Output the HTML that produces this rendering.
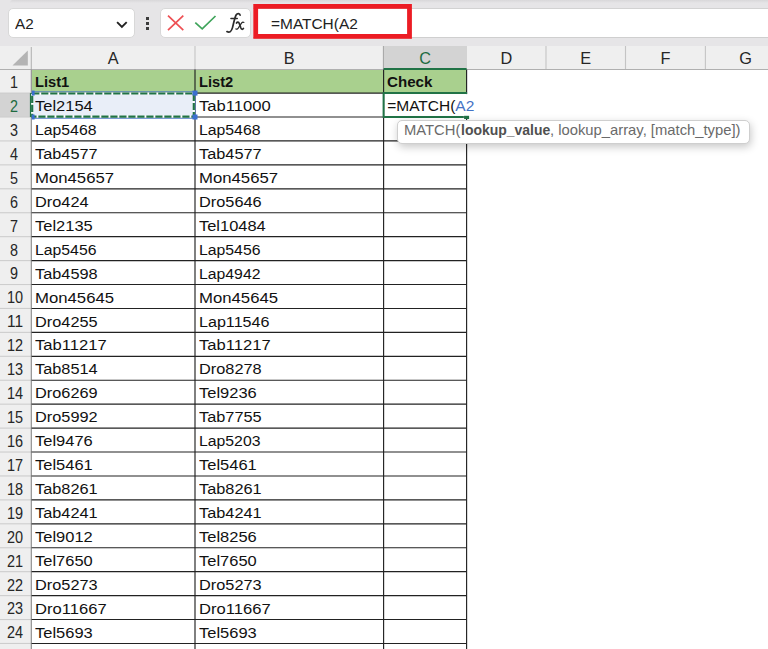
<!DOCTYPE html>
<html><head><meta charset="utf-8"><title>Excel</title>
<style>
html,body{margin:0;padding:0;}
body{width:768px;height:649px;overflow:hidden;background:#fff;position:relative;font-family:"Liberation Sans",sans-serif;color:#000;}
.a{position:absolute;}
.t{position:absolute;white-space:nowrap;line-height:20px;transform-origin:0 0;}
.c{transform-origin:50% 0;}
.b{font-weight:bold;}
</style></head><body>

<div class="a" style="left:0;top:0;width:768px;height:46px;background:#e6e5e7"></div>
<div class="a" style="left:10px;top:0;width:758px;height:3px;border-top-left-radius:3px;background:linear-gradient(#d8d7d9,#e6e5e7)"></div>
<div class="a" style="left:8px;top:8px;width:125px;height:28px;background:#fff;border:1px solid #d8d8d8;border-radius:5px"></div>
<svg class="a" style="left:114px;top:16px" width="16" height="16" viewBox="0 0 16 16"><path d="M3.1 6.1 L7.9 10.9 L12.7 6.1" fill="none" stroke="#222" stroke-width="1.9"/></svg>
<div class="a" style="left:145.6px;top:17.0px;width:3.3px;height:3px;background:#3c3c3c"></div>
<div class="a" style="left:145.6px;top:22.1px;width:3.3px;height:3px;background:#3c3c3c"></div>
<div class="a" style="left:145.6px;top:27.2px;width:3.3px;height:3px;background:#3c3c3c"></div>
<div class="a" style="left:160px;top:8px;width:89px;height:28px;background:#fff;border:1px solid #d8d8d8;border-radius:5px"></div>
<svg class="a" style="left:0;top:0" width="260" height="46" viewBox="0 0 260 46"><path d="M168 15.6 L183.3 30.2 M183.3 15.6 L168 30.2" fill="none" stroke="#ee5054" stroke-width="1.7"/><path d="M195.3 22.6 L202.2 28.9 L215.5 16" fill="none" stroke="#3fa45b" stroke-width="1.7"/><g fill="none" stroke="#2b2b2b" stroke-linecap="round"><path d="M240.1 15.2 C239.8 13.2 237.3 12.9 236.1 15 C234.7 17.5 233.7 23 232.5 27.6 C231.5 31.2 229.6 33.2 226.9 31.6" stroke-width="1.7"/><path d="M230.9 18.5 L237.3 18.5" stroke-width="1.4"/><path d="M236.5 23 C237.4 21.6 238.6 21.8 239.2 23.3 L240.9 28 C241.5 29.5 242.5 29.7 243.4 28.5" stroke-width="1.7"/><path d="M243.9 22.4 C243.1 21.8 242.4 22 241.7 22.9 L238.2 28.2 C237.5 29.2 236.7 29.5 235.9 28.9" stroke-width="1.2"/></g></svg>
<div class="a" style="left:253px;top:8px;width:515px;height:30px;background:#fff;border-top:1px solid #d2d2d2;border-bottom:1px solid #cfcfcf;box-sizing:border-box"></div>
<svg class="a" style="left:250px;top:0" width="170" height="44" viewBox="0 0 170 44"><rect x="5.7" y="6.4" width="153.8" height="30" fill="none" stroke="#ec1c24" stroke-width="4.8"/></svg>
<div class="a" style="left:0;top:46.0px;width:768px;height:23.5px;background:#efefef"></div>
<div class="a" style="left:0;top:69.5px;width:31.5px;height:600px;background:#efefef"></div>
<div class="a" style="left:383.6px;top:46.0px;width:83.0px;height:23.5px;background:#d3d3d3"></div>
<div class="a" style="left:0;top:93.08px;width:31px;height:23.93px;background:#d3d3d3"></div>
<div class="a" style="left:31.6px;top:69.5px;width:435.0px;height:23.58px;background:#a9d08e"></div>
<div class="a" style="left:31.6px;top:93.08px;width:163.4px;height:23.93px;background:#e9eef8"></div>
<svg class="a" style="left:0;top:0" width="768" height="649" viewBox="0 0 768 649"><path d="M27.8 50.5 L27.8 65.5 L12.5 65.5 Z" fill="#b4b4b4"/><line x1="195.0" y1="46.0" x2="195.0" y2="69.5" stroke="#c4c4c4" stroke-width="1.1"/><line x1="546.0" y1="46.0" x2="546.0" y2="69.5" stroke="#c4c4c4" stroke-width="1.1"/><line x1="625.5" y1="46.0" x2="625.5" y2="69.5" stroke="#c4c4c4" stroke-width="1.1"/><line x1="705.4" y1="46.0" x2="705.4" y2="69.5" stroke="#c4c4c4" stroke-width="1.1"/><line x1="383.4" y1="46.0" x2="383.4" y2="69.5" stroke="#a2a2a2" stroke-width="1"/><line x1="0" y1="69.5" x2="768" y2="69.5" stroke="#b0b0b0" stroke-width="1.2"/><line x1="0" y1="93.08" x2="31.5" y2="93.08" stroke="#cdcdcd" stroke-width="1.1"/><line x1="0" y1="117.01" x2="31.5" y2="117.01" stroke="#cdcdcd" stroke-width="1.1"/><line x1="0" y1="140.94" x2="31.5" y2="140.94" stroke="#cdcdcd" stroke-width="1.1"/><line x1="0" y1="164.87" x2="31.5" y2="164.87" stroke="#cdcdcd" stroke-width="1.1"/><line x1="0" y1="188.80" x2="31.5" y2="188.80" stroke="#cdcdcd" stroke-width="1.1"/><line x1="0" y1="212.73" x2="31.5" y2="212.73" stroke="#cdcdcd" stroke-width="1.1"/><line x1="0" y1="236.66" x2="31.5" y2="236.66" stroke="#cdcdcd" stroke-width="1.1"/><line x1="0" y1="260.59" x2="31.5" y2="260.59" stroke="#cdcdcd" stroke-width="1.1"/><line x1="0" y1="284.52" x2="31.5" y2="284.52" stroke="#cdcdcd" stroke-width="1.1"/><line x1="0" y1="308.45" x2="31.5" y2="308.45" stroke="#cdcdcd" stroke-width="1.1"/><line x1="0" y1="332.38" x2="31.5" y2="332.38" stroke="#cdcdcd" stroke-width="1.1"/><line x1="0" y1="356.31" x2="31.5" y2="356.31" stroke="#cdcdcd" stroke-width="1.1"/><line x1="0" y1="380.24" x2="31.5" y2="380.24" stroke="#cdcdcd" stroke-width="1.1"/><line x1="0" y1="404.17" x2="31.5" y2="404.17" stroke="#cdcdcd" stroke-width="1.1"/><line x1="0" y1="428.10" x2="31.5" y2="428.10" stroke="#cdcdcd" stroke-width="1.1"/><line x1="0" y1="452.03" x2="31.5" y2="452.03" stroke="#cdcdcd" stroke-width="1.1"/><line x1="0" y1="475.96" x2="31.5" y2="475.96" stroke="#cdcdcd" stroke-width="1.1"/><line x1="0" y1="499.89" x2="31.5" y2="499.89" stroke="#cdcdcd" stroke-width="1.1"/><line x1="0" y1="523.82" x2="31.5" y2="523.82" stroke="#cdcdcd" stroke-width="1.1"/><line x1="0" y1="547.75" x2="31.5" y2="547.75" stroke="#cdcdcd" stroke-width="1.1"/><line x1="0" y1="571.68" x2="31.5" y2="571.68" stroke="#cdcdcd" stroke-width="1.1"/><line x1="0" y1="595.61" x2="31.5" y2="595.61" stroke="#cdcdcd" stroke-width="1.1"/><line x1="0" y1="619.54" x2="31.5" y2="619.54" stroke="#cdcdcd" stroke-width="1.1"/><line x1="0" y1="643.47" x2="31.5" y2="643.47" stroke="#cdcdcd" stroke-width="1.1"/><line x1="0" y1="667.40" x2="31.5" y2="667.40" stroke="#cdcdcd" stroke-width="1.1"/><line x1="31.3" y1="47.0" x2="31.3" y2="69.5" stroke="#b4b4b4" stroke-width="1.1"/><line x1="31.3" y1="69.5" x2="31.3" y2="649" stroke="#8a8a8a" stroke-width="1.1"/><line x1="31.6" y1="93.08" x2="466.6" y2="93.08" stroke="#222" stroke-width="1.15"/><line x1="31.6" y1="117.01" x2="466.6" y2="117.01" stroke="#222" stroke-width="1.15"/><line x1="31.6" y1="140.94" x2="466.6" y2="140.94" stroke="#222" stroke-width="1.15"/><line x1="31.6" y1="164.87" x2="466.6" y2="164.87" stroke="#222" stroke-width="1.15"/><line x1="31.6" y1="188.80" x2="466.6" y2="188.80" stroke="#222" stroke-width="1.15"/><line x1="31.6" y1="212.73" x2="466.6" y2="212.73" stroke="#222" stroke-width="1.15"/><line x1="31.6" y1="236.66" x2="466.6" y2="236.66" stroke="#222" stroke-width="1.15"/><line x1="31.6" y1="260.59" x2="466.6" y2="260.59" stroke="#222" stroke-width="1.15"/><line x1="31.6" y1="284.52" x2="466.6" y2="284.52" stroke="#222" stroke-width="1.15"/><line x1="31.6" y1="308.45" x2="466.6" y2="308.45" stroke="#222" stroke-width="1.15"/><line x1="31.6" y1="332.38" x2="466.6" y2="332.38" stroke="#222" stroke-width="1.15"/><line x1="31.6" y1="356.31" x2="466.6" y2="356.31" stroke="#222" stroke-width="1.15"/><line x1="31.6" y1="380.24" x2="466.6" y2="380.24" stroke="#222" stroke-width="1.15"/><line x1="31.6" y1="404.17" x2="466.6" y2="404.17" stroke="#222" stroke-width="1.15"/><line x1="31.6" y1="428.10" x2="466.6" y2="428.10" stroke="#222" stroke-width="1.15"/><line x1="31.6" y1="452.03" x2="466.6" y2="452.03" stroke="#222" stroke-width="1.15"/><line x1="31.6" y1="475.96" x2="466.6" y2="475.96" stroke="#222" stroke-width="1.15"/><line x1="31.6" y1="499.89" x2="466.6" y2="499.89" stroke="#222" stroke-width="1.15"/><line x1="31.6" y1="523.82" x2="466.6" y2="523.82" stroke="#222" stroke-width="1.15"/><line x1="31.6" y1="547.75" x2="466.6" y2="547.75" stroke="#222" stroke-width="1.15"/><line x1="31.6" y1="571.68" x2="466.6" y2="571.68" stroke="#222" stroke-width="1.15"/><line x1="31.6" y1="595.61" x2="466.6" y2="595.61" stroke="#222" stroke-width="1.15"/><line x1="31.6" y1="619.54" x2="466.6" y2="619.54" stroke="#222" stroke-width="1.15"/><line x1="31.6" y1="643.47" x2="466.6" y2="643.47" stroke="#222" stroke-width="1.15"/><line x1="31.6" y1="667.40" x2="466.6" y2="667.40" stroke="#222" stroke-width="1.15"/><line x1="195.0" y1="69.5" x2="195.0" y2="649" stroke="#222" stroke-width="1.15"/><line x1="383.6" y1="69.5" x2="383.6" y2="649" stroke="#222" stroke-width="1.15"/><line x1="466.6" y1="69.5" x2="466.6" y2="649" stroke="#222" stroke-width="1.15"/><rect x="465.1" y="94.08" width="3" height="21.93" fill="#fff"/><line x1="383.6" y1="68.9" x2="466.6" y2="68.9" stroke="#217346" stroke-width="2"/><line x1="31" y1="93.08" x2="31" y2="117.01" stroke="#217346" stroke-width="2.2"/><path d="M467.1 93.08 L383.6 93.08 L383.6 117.01 L463.6 117.01" fill="none" stroke="#217346" stroke-width="2"/><rect x="464.1" y="115.81" width="5" height="3.2" fill="#217346"/><rect x="32.4" y="91.88" width="162.6" height="26.33" fill="none" stroke="#4472c4" stroke-width="1"/><rect x="32.2" y="93.48" width="161.6" height="23.13" fill="none" stroke="#fff" stroke-width="2.2"/><rect x="32.2" y="93.48" width="161.6" height="23.13" fill="none" stroke="#217346" stroke-width="2.2" stroke-dasharray="7.2 1.8"/><clipPath id="cp"><rect x="31.8" y="0" width="800" height="700"/></clipPath><g clip-path="url(#cp)"><rect x="29.6" y="90.58" width="5" height="5" fill="#3b6fd0"/><rect x="192.5" y="90.58" width="5" height="5" fill="#3b6fd0"/><rect x="29.6" y="114.51" width="5" height="5" fill="#3b6fd0"/><rect x="192.5" y="114.51" width="5" height="5" fill="#3b6fd0"/></g></svg>
<div class="a" style="left:396.5px;top:120px;width:353px;height:24px;background:#fff;border:1px solid #cfcfcf;border-radius:5px;box-sizing:border-box;box-shadow:1px 3px 9px rgba(0,0,0,0.22)"></div>
<div class="t b" style="top:72.21px;font-size:15.5px;color:#111;left:34.70px;transform:scaleX(0.9449);">List1</div>
<div class="t b" style="top:72.21px;font-size:15.5px;color:#111;left:198.60px;transform:scaleX(0.9449);">List2</div>
<div class="t c" style="top:72.00px;font-size:16.4px;color:#262626;left:-15.60px;width:60px;text-align:center;transform:scaleX(0.8767);">1</div>
<div class="t" style="top:96.14px;font-size:15.5px;color:#111;left:34.70px;transform:scaleX(1.0627);">Tel2154</div>
<div class="t" style="top:96.14px;font-size:15.5px;color:#111;left:198.60px;transform:scaleX(1.0703);">Tab11000</div>
<div class="t c" style="top:95.93px;font-size:16.4px;color:#1e6b41;left:-15.60px;width:60px;text-align:center;transform:scaleX(0.8767);">2</div>
<div class="t" style="top:120.07px;font-size:15.5px;color:#111;left:34.70px;transform:scaleX(1.0183);">Lap5468</div>
<div class="t" style="top:120.07px;font-size:15.5px;color:#111;left:198.60px;transform:scaleX(1.0183);">Lap5468</div>
<div class="t c" style="top:119.86px;font-size:16.4px;color:#262626;left:-15.60px;width:60px;text-align:center;transform:scaleX(0.8767);">3</div>
<div class="t" style="top:144.00px;font-size:15.5px;color:#111;left:34.70px;transform:scaleX(1.0530);">Tab4577</div>
<div class="t" style="top:144.00px;font-size:15.5px;color:#111;left:198.60px;transform:scaleX(1.0530);">Tab4577</div>
<div class="t c" style="top:143.79px;font-size:16.4px;color:#262626;left:-15.60px;width:60px;text-align:center;transform:scaleX(0.8767);">4</div>
<div class="t" style="top:167.93px;font-size:15.5px;color:#111;left:34.70px;transform:scaleX(1.0792);">Mon45657</div>
<div class="t" style="top:167.93px;font-size:15.5px;color:#111;left:198.60px;transform:scaleX(1.0792);">Mon45657</div>
<div class="t c" style="top:167.72px;font-size:16.4px;color:#262626;left:-15.60px;width:60px;text-align:center;transform:scaleX(0.8767);">5</div>
<div class="t" style="top:191.86px;font-size:15.5px;color:#111;left:34.70px;transform:scaleX(1.0544);">Dro424</div>
<div class="t" style="top:191.86px;font-size:15.5px;color:#111;left:198.60px;transform:scaleX(1.0532);">Dro5646</div>
<div class="t c" style="top:191.65px;font-size:16.4px;color:#262626;left:-15.60px;width:60px;text-align:center;transform:scaleX(0.8767);">6</div>
<div class="t" style="top:215.79px;font-size:15.5px;color:#111;left:34.70px;transform:scaleX(1.0627);">Tel2135</div>
<div class="t" style="top:215.79px;font-size:15.5px;color:#111;left:198.60px;transform:scaleX(1.0604);">Tel10484</div>
<div class="t c" style="top:215.58px;font-size:16.4px;color:#262626;left:-15.60px;width:60px;text-align:center;transform:scaleX(0.8767);">7</div>
<div class="t" style="top:239.72px;font-size:15.5px;color:#111;left:34.70px;transform:scaleX(1.0183);">Lap5456</div>
<div class="t" style="top:239.72px;font-size:15.5px;color:#111;left:198.60px;transform:scaleX(1.0183);">Lap5456</div>
<div class="t c" style="top:239.51px;font-size:16.4px;color:#262626;left:-15.60px;width:60px;text-align:center;transform:scaleX(0.8767);">8</div>
<div class="t" style="top:263.65px;font-size:15.5px;color:#111;left:34.70px;transform:scaleX(1.0530);">Tab4598</div>
<div class="t" style="top:263.65px;font-size:15.5px;color:#111;left:198.60px;transform:scaleX(1.0183);">Lap4942</div>
<div class="t c" style="top:263.44px;font-size:16.4px;color:#262626;left:-15.60px;width:60px;text-align:center;transform:scaleX(0.8767);">9</div>
<div class="t" style="top:287.58px;font-size:15.5px;color:#111;left:34.70px;transform:scaleX(1.0792);">Mon45645</div>
<div class="t" style="top:287.58px;font-size:15.5px;color:#111;left:198.60px;transform:scaleX(1.0792);">Mon45645</div>
<div class="t c" style="top:287.37px;font-size:16.4px;color:#262626;left:-15.20px;width:60px;text-align:center;transform:scaleX(0.8829);">10</div>
<div class="t" style="top:311.51px;font-size:15.5px;color:#111;left:34.70px;transform:scaleX(1.0532);">Dro4255</div>
<div class="t" style="top:311.51px;font-size:15.5px;color:#111;left:198.60px;transform:scaleX(1.0392);">Lap11546</div>
<div class="t c" style="top:311.30px;font-size:16.4px;color:#262626;left:-15.20px;width:60px;text-align:center;transform:scaleX(0.9462);">11</div>
<div class="t" style="top:335.44px;font-size:15.5px;color:#111;left:34.70px;transform:scaleX(1.0703);">Tab11217</div>
<div class="t" style="top:335.44px;font-size:15.5px;color:#111;left:198.60px;transform:scaleX(1.0703);">Tab11217</div>
<div class="t c" style="top:335.23px;font-size:16.4px;color:#262626;left:-15.20px;width:60px;text-align:center;transform:scaleX(0.8829);">12</div>
<div class="t" style="top:359.37px;font-size:15.5px;color:#111;left:34.70px;transform:scaleX(1.0530);">Tab8514</div>
<div class="t" style="top:359.37px;font-size:15.5px;color:#111;left:198.60px;transform:scaleX(1.0532);">Dro8278</div>
<div class="t c" style="top:359.16px;font-size:16.4px;color:#262626;left:-15.20px;width:60px;text-align:center;transform:scaleX(0.8829);">13</div>
<div class="t" style="top:383.30px;font-size:15.5px;color:#111;left:34.70px;transform:scaleX(1.0532);">Dro6269</div>
<div class="t" style="top:383.30px;font-size:15.5px;color:#111;left:198.60px;transform:scaleX(1.0627);">Tel9236</div>
<div class="t c" style="top:383.09px;font-size:16.4px;color:#262626;left:-15.20px;width:60px;text-align:center;transform:scaleX(0.8829);">14</div>
<div class="t" style="top:407.23px;font-size:15.5px;color:#111;left:34.70px;transform:scaleX(1.0532);">Dro5992</div>
<div class="t" style="top:407.23px;font-size:15.5px;color:#111;left:198.60px;transform:scaleX(1.0530);">Tab7755</div>
<div class="t c" style="top:407.02px;font-size:16.4px;color:#262626;left:-15.20px;width:60px;text-align:center;transform:scaleX(0.8829);">15</div>
<div class="t" style="top:431.16px;font-size:15.5px;color:#111;left:34.70px;transform:scaleX(1.0627);">Tel9476</div>
<div class="t" style="top:431.16px;font-size:15.5px;color:#111;left:198.60px;transform:scaleX(1.0183);">Lap5203</div>
<div class="t c" style="top:430.95px;font-size:16.4px;color:#262626;left:-15.20px;width:60px;text-align:center;transform:scaleX(0.8829);">16</div>
<div class="t" style="top:455.09px;font-size:15.5px;color:#111;left:34.70px;transform:scaleX(1.0627);">Tel5461</div>
<div class="t" style="top:455.09px;font-size:15.5px;color:#111;left:198.60px;transform:scaleX(1.0627);">Tel5461</div>
<div class="t c" style="top:454.88px;font-size:16.4px;color:#262626;left:-15.20px;width:60px;text-align:center;transform:scaleX(0.8829);">17</div>
<div class="t" style="top:479.02px;font-size:15.5px;color:#111;left:34.70px;transform:scaleX(1.0530);">Tab8261</div>
<div class="t" style="top:479.02px;font-size:15.5px;color:#111;left:198.60px;transform:scaleX(1.0530);">Tab8261</div>
<div class="t c" style="top:478.81px;font-size:16.4px;color:#262626;left:-15.20px;width:60px;text-align:center;transform:scaleX(0.8829);">18</div>
<div class="t" style="top:502.95px;font-size:15.5px;color:#111;left:34.70px;transform:scaleX(1.0530);">Tab4241</div>
<div class="t" style="top:502.95px;font-size:15.5px;color:#111;left:198.60px;transform:scaleX(1.0530);">Tab4241</div>
<div class="t c" style="top:502.74px;font-size:16.4px;color:#262626;left:-15.20px;width:60px;text-align:center;transform:scaleX(0.8829);">19</div>
<div class="t" style="top:526.88px;font-size:15.5px;color:#111;left:34.70px;transform:scaleX(1.0627);">Tel9012</div>
<div class="t" style="top:526.88px;font-size:15.5px;color:#111;left:198.60px;transform:scaleX(1.0627);">Tel8256</div>
<div class="t c" style="top:526.67px;font-size:16.4px;color:#262626;left:-15.20px;width:60px;text-align:center;transform:scaleX(0.8829);">20</div>
<div class="t" style="top:550.81px;font-size:15.5px;color:#111;left:34.70px;transform:scaleX(1.0627);">Tel7650</div>
<div class="t" style="top:550.81px;font-size:15.5px;color:#111;left:198.60px;transform:scaleX(1.0627);">Tel7650</div>
<div class="t c" style="top:550.60px;font-size:16.4px;color:#262626;left:-15.20px;width:60px;text-align:center;transform:scaleX(0.8829);">21</div>
<div class="t" style="top:574.74px;font-size:15.5px;color:#111;left:34.70px;transform:scaleX(1.0532);">Dro5273</div>
<div class="t" style="top:574.74px;font-size:15.5px;color:#111;left:198.60px;transform:scaleX(1.0532);">Dro5273</div>
<div class="t c" style="top:574.53px;font-size:16.4px;color:#262626;left:-15.20px;width:60px;text-align:center;transform:scaleX(0.8829);">22</div>
<div class="t" style="top:598.67px;font-size:15.5px;color:#111;left:34.70px;transform:scaleX(1.0704);">Dro11667</div>
<div class="t" style="top:598.67px;font-size:15.5px;color:#111;left:198.60px;transform:scaleX(1.0704);">Dro11667</div>
<div class="t c" style="top:598.46px;font-size:16.4px;color:#262626;left:-15.20px;width:60px;text-align:center;transform:scaleX(0.8829);">23</div>
<div class="t" style="top:622.60px;font-size:15.5px;color:#111;left:34.70px;transform:scaleX(1.0627);">Tel5693</div>
<div class="t" style="top:622.60px;font-size:15.5px;color:#111;left:198.60px;transform:scaleX(1.0627);">Tel5693</div>
<div class="t c" style="top:622.39px;font-size:16.4px;color:#262626;left:-15.20px;width:60px;text-align:center;transform:scaleX(0.8829);">24</div>
<div class="t b" style="top:72.11px;font-size:15.5px;color:#111;left:386.90px;transform:scaleX(0.9769);">Check</div>
<div class="t" style="top:96.14px;font-size:15.5px;color:#111;left:387.20px;">=MATCH(<span style="color:#4472c4">A2</span></div>
<div class="t c" style="top:48.05px;font-size:16.3px;color:#262626;left:83.30px;width:60px;text-align:center;">A</div>
<div class="t c" style="top:48.05px;font-size:16.3px;color:#262626;left:259.30px;width:60px;text-align:center;">B</div>
<div class="t c" style="top:48.05px;font-size:16.3px;color:#1e6b41;left:395.10px;width:60px;text-align:center;">C</div>
<div class="t c" style="top:48.05px;font-size:16.3px;color:#262626;left:476.30px;width:60px;text-align:center;">D</div>
<div class="t c" style="top:48.05px;font-size:16.3px;color:#262626;left:555.75px;width:60px;text-align:center;">E</div>
<div class="t c" style="top:48.05px;font-size:16.3px;color:#262626;left:635.45px;width:60px;text-align:center;">F</div>
<div class="t c" style="top:48.05px;font-size:16.3px;color:#262626;left:715.70px;width:60px;text-align:center;">G</div>
<div class="t" style="top:13.53px;font-size:15.5px;color:#222;left:14.80px;transform:scaleX(0.9858);">A2</div>
<div class="t" style="top:13.93px;font-size:15.5px;color:#222;left:270.60px;transform:scaleX(0.9961);">=MATCH(A2</div>
<div class="t" style="top:120.21px;font-size:14.4px;color:#6a6a6a;left:404.20px;transform:scaleX(1.0275);">MATCH(</div>
<div class="t b" style="top:120.21px;font-size:14.4px;color:#505050;left:460.80px;transform:scaleX(0.9710);">lookup_value</div>
<div class="t" style="top:120.21px;font-size:14.4px;color:#6a6a6a;left:550.20px;transform:scaleX(1.0280);">, lookup_array, [match_type])</div>
</body></html>
